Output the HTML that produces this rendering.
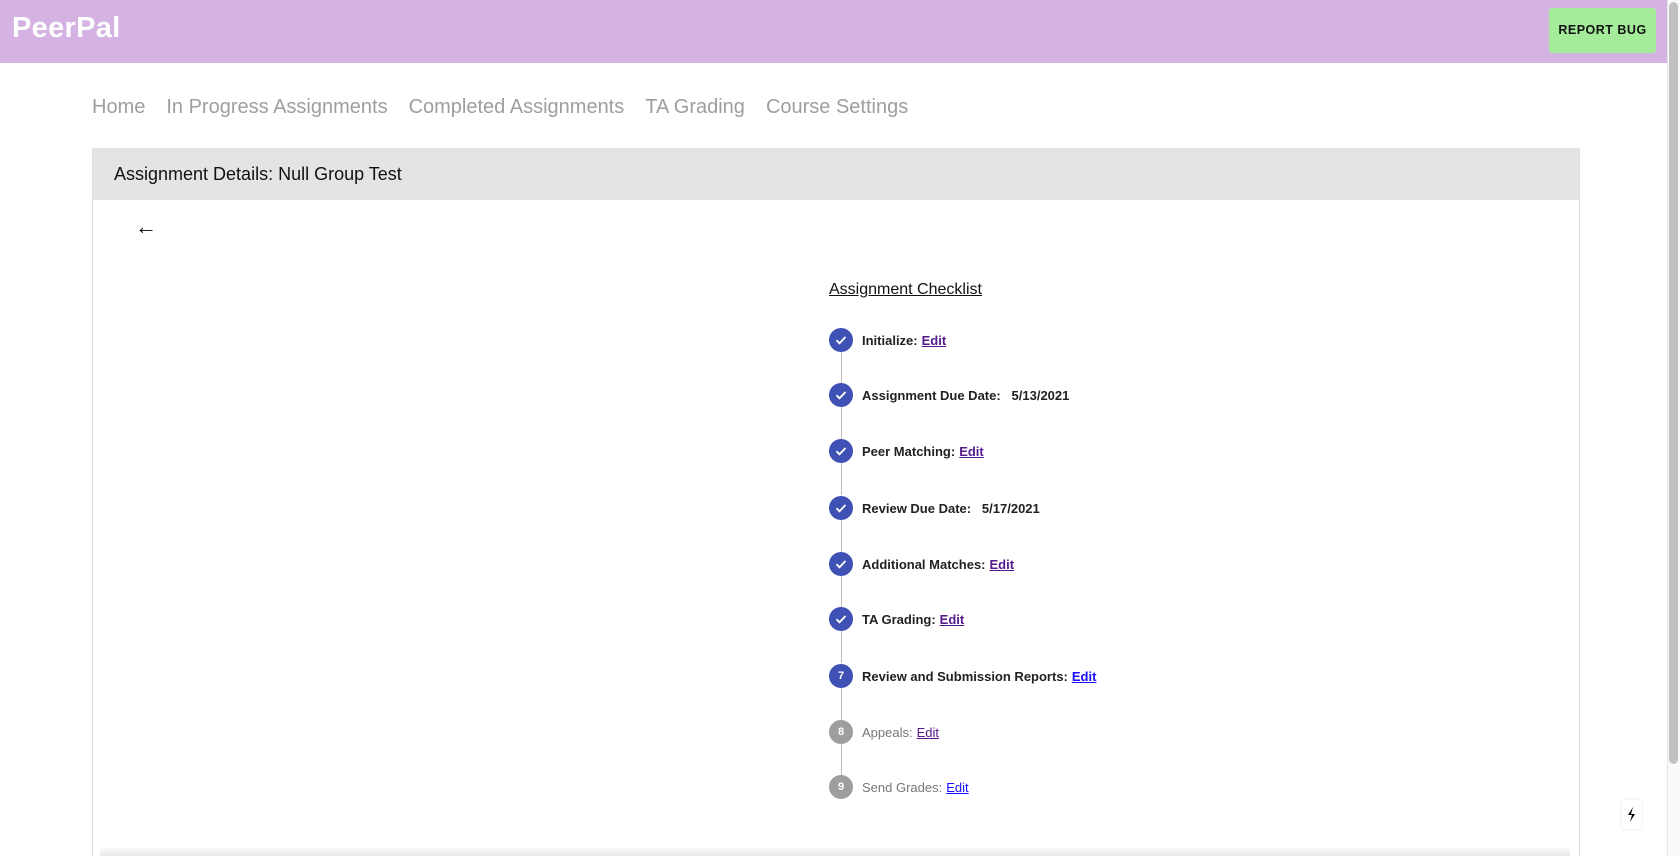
<!DOCTYPE html>
<html style="width:1680px;height:856px;overflow:hidden"><head><style>
*{margin:0;padding:0;box-sizing:border-box}
body{width:1680px;height:856px;overflow:hidden;background:#fff;font-family:"Liberation Sans",Arial,sans-serif;position:relative}
.hdr{position:absolute;left:0;top:0;width:1667px;height:63px;background:#d4b3e3}
.logo{position:absolute;left:12px;top:12px;color:#fff;font-weight:bold;font-size:29px;letter-spacing:0.3px}
.bug{position:absolute;left:1549px;top:8px;width:107px;height:45px;background:#a4eb9a;border-radius:3px;font-size:12.5px;font-weight:bold;text-align:center;line-height:45px;letter-spacing:0.5px;color:#111}
.sb{position:absolute;left:1667px;top:0;width:13px;height:856px;background:#fafafa;border-left:1px solid #e6e6e6}
.thumb{position:absolute;left:1669px;top:2px;width:9px;height:762px;background:#c1c1c1;border-radius:5px}
.nav{position:absolute;top:96px;left:92px;font-size:20px;color:#9e9e9e;white-space:nowrap}
.nav span{margin-right:21px}
.card{position:absolute;left:92px;top:148px;width:1488px;height:708px;border:1px solid #ddd;border-top:none;border-bottom:none;overflow:hidden}
.ch{height:52px;background:#e4e4e4;font-size:18px;padding-left:21px;line-height:52px;color:#111}
.back{position:absolute;left:42px;top:66px;font-size:22px}
.title{position:absolute;left:829px;top:281px;font-size:16px;text-decoration:underline;color:#111}
.step{position:absolute;left:829px;height:24px;display:flex;align-items:center;font-family:"Liberation Sans",Arial,sans-serif;font-size:13px;font-weight:bold;color:#222}
.c{width:24px;height:24px;border-radius:50%;background:#3f51b5;color:#fff;font-size:11px;display:flex;align-items:center;justify-content:center;margin-right:9px;font-weight:bold}
.g .c{background:#9e9e9e}.g{color:#777;font-weight:normal}
a{color:#551a8b;text-decoration:underline;margin-left:4px}
a.b{color:#1a0dff}
.line{position:absolute;left:841px;width:1px;background:#bdbdbd;height:32px}
.bolt{position:absolute;left:1622px;top:800px;width:19px;height:29px;background:#fff;border-radius:3px;box-shadow:0 0 4px rgba(0,0,0,.1)}
.shadow{position:absolute;left:100px;top:846px;width:1470px;height:10px;background:linear-gradient(#fff,#e8e8e8)}
</style></head><body>
<div class="hdr"><div class="logo">PeerPal</div><div class="bug">REPORT BUG</div></div>
<div class="sb"></div><div class="thumb"></div>
<div class="nav"><span>Home</span><span>In Progress Assignments</span><span>Completed Assignments</span><span>TA Grading</span><span>Course Settings</span></div>
<div class="card"><div class="ch">Assignment Details: Null Group Test</div><div class="back">←</div></div>
<div class="shadow"></div>
<div class="title">Assignment Checklist</div>
<div class="line" style="top:352px"></div><div class="line" style="top:407px"></div><div class="line" style="top:463px"></div><div class="line" style="top:520px"></div><div class="line" style="top:576px"></div><div class="line" style="top:631px"></div><div class="line" style="top:688px"></div><div class="line" style="top:744px"></div>
<div class="step" style="top:328px"><div class="c"><svg width="14" height="14" viewBox="0 0 14 14"><path d="M2.5 7.3l3 3 6-6.3" stroke="#fff" stroke-width="1.8" fill="none"/></svg></div>Initialize:<a>Edit</a></div>
<div class="step" style="top:383px"><div class="c"><svg width="14" height="14" viewBox="0 0 14 14"><path d="M2.5 7.3l3 3 6-6.3" stroke="#fff" stroke-width="1.8" fill="none"/></svg></div>Assignment Due Date:&nbsp;&nbsp;&nbsp;5/13/2021</div>
<div class="step" style="top:439px"><div class="c"><svg width="14" height="14" viewBox="0 0 14 14"><path d="M2.5 7.3l3 3 6-6.3" stroke="#fff" stroke-width="1.8" fill="none"/></svg></div>Peer Matching:<a>Edit</a></div>
<div class="step" style="top:496px"><div class="c"><svg width="14" height="14" viewBox="0 0 14 14"><path d="M2.5 7.3l3 3 6-6.3" stroke="#fff" stroke-width="1.8" fill="none"/></svg></div>Review Due Date:&nbsp;&nbsp;&nbsp;5/17/2021</div>
<div class="step" style="top:552px"><div class="c"><svg width="14" height="14" viewBox="0 0 14 14"><path d="M2.5 7.3l3 3 6-6.3" stroke="#fff" stroke-width="1.8" fill="none"/></svg></div>Additional Matches:<a>Edit</a></div>
<div class="step" style="top:607px"><div class="c"><svg width="14" height="14" viewBox="0 0 14 14"><path d="M2.5 7.3l3 3 6-6.3" stroke="#fff" stroke-width="1.8" fill="none"/></svg></div>TA Grading:<a>Edit</a></div>
<div class="step" style="top:664px"><div class="c">7</div>Review and Submission Reports:<a class="b">Edit</a></div>
<div class="step g" style="top:720px"><div class="c">8</div>Appeals:<a>Edit</a></div>
<div class="step g" style="top:775px"><div class="c">9</div>Send Grades:<a class="b">Edit</a></div>
<div class="bolt"><svg width="19" height="29" viewBox="0 0 19 29"><path d="M11 7l-5 8h4l-2 7 5-8h-4z" fill="#000"/></svg></div>
</body></html>
